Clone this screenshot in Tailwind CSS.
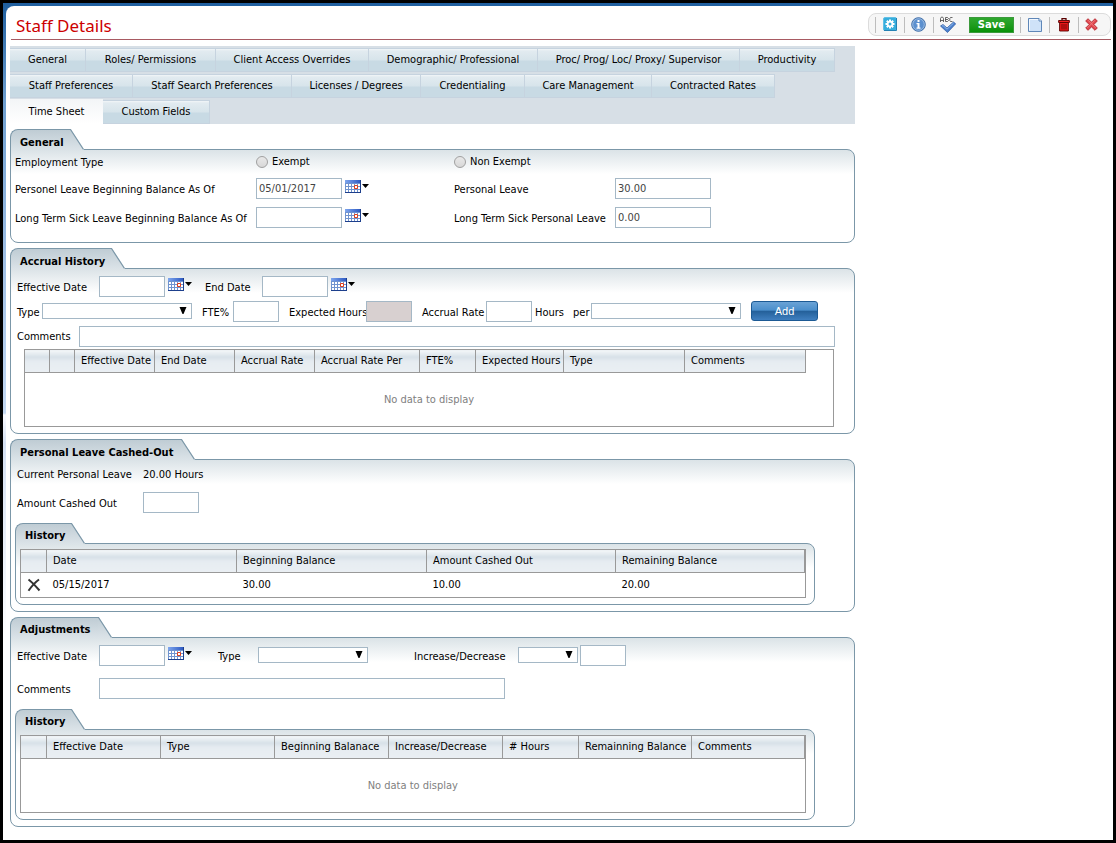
<!DOCTYPE html>
<html lang="en">
<head>
<meta charset="utf-8">
<title>Staff Details</title>
<script src="https://cdn.jsdelivr.net/npm/@tailwindcss/browser@4"></script>
</head>
<body class="flex min-h-screen flex-col border-3 border-black font-['DejaVu_Sans_Condensed','DejaVu_Sans',sans-serif] text-[11px] leading-4 text-black">

<svg class="absolute size-0" aria-hidden="true">
  <defs>
    <linearGradient id="tabfill" x1="0" y1="0" x2="0" y2="1"><stop offset="0" stop-color="#bfccd4"/><stop offset="1" stop-color="#dbe3e8"/></linearGradient>
    <linearGradient id="calhead" x1="0" y1="0" x2="1" y2="0"><stop offset="0" stop-color="#7ea6ee"/><stop offset="1" stop-color="#2a56c0"/></linearGradient>
  </defs>
  <symbol id="calendar" viewBox="0 0 24 13">
    <rect width="16" height="13" fill="#6f93cf"/>
    <rect width="16" height="3" fill="url(#calhead)"/>
    <path d="M1 4h2v2H1zM4 4h2v2H4zM7 4h2v2H7zM10 4h2v2h-2zM13 4h2v2h-2zM1 7h2v2H1zM4 7h2v2H4zM7 7h2v2H7zM13 7h2v2h-2zM1 10h2v2H1zM4 10h2v2H4zM7 10h2v2H7zM10 10h2v2h-2zM13 10h2v2h-2z" fill="#fff"/>
    <path d="M9.500 5.500h3v3h-3z" fill="#fff" stroke="#e0401c"/>
    <path d="M15.500 0v13M0 12.500h16" stroke="#1d3f8c"/>
    <path d="M17 4h7l-3.500 4z" fill="#000"/>
  </symbol>
  <symbol id="slant" viewBox="0 0 14 21">
    <path d="M0 0h.5L14 20v1H0z" fill="url(#tabfill)"/>
    <path d="M0 .5h.5L13.500 20.500" fill="none" stroke="#7b97a8" stroke-width="1.200"/>
  </symbol>
</svg>

<div class="flex flex-1 flex-col bg-[#1f5f9f] bg-[linear-gradient(#1f5f9f_0px,#6f9fcf_100px,#9dbde3_250px,#c5d9f2_410px,#fafbff_412px,#d5e0f2_440px,#fff_640px)] pt-[3px] pl-[3px]">
<main class="flex-1 rounded-tl-lg bg-white pt-1 pr-0.5 pb-3 pl-1 [&_label[for]]:pt-0.5">

  <header class="ml-px flex h-[30px] items-center justify-between border-b border-[#a85a62]">
    <h1 class="pt-0.5 pl-[5px] font-['Noto_Sans',sans-serif] text-[17px] leading-5 text-[#cc0000]">Staff Details</h1>
    <div class="flex h-[23px] items-center rounded-lg border border-[#dcdcdc] bg-[#f6f6f6] pl-[6px]">
      <button aria-label="Settings" class="flex h-4 w-[29px] items-center border-l border-[#bdbdbd] pl-[7px]">
        <svg class="-mt-0.5" width="14" height="14" viewBox="0 0 14 14"><rect x=".5" y=".5" width="13" height="13" rx="1.500" fill="#36aedd" stroke="#62bfe4"/><path d="M1 13.500h12.500V1" fill="none" stroke="#2482b4"/><g stroke="#fff" stroke-width="2"><path d="M7 2.500v9M2.500 7h9M3.800 3.800l6.400 6.400M10.200 3.800l-6.400 6.400"/></g><circle cx="7" cy="7" r="3.200" fill="#fff"/><circle cx="7" cy="7" r="1.500" fill="#36aedd"/></svg>
      </button>
      <button aria-label="Information" class="flex h-4 w-[29px] items-center border-l border-[#bdbdbd] pl-[6px]">
        <svg width="15" height="15" viewBox="0 0 15 15"><circle cx="7.500" cy="7.500" r="6.800" fill="#4a7fc1" stroke="#3f6ea8"/><circle cx="7.500" cy="7.500" r="5.800" fill="#5c90cf" stroke="#b4cdea" stroke-width=".8"/><path d="M6.500 3h2v2h-2zM5.500 6h3v4.500h1v1.200H5.500v-1.200h1V7.200h-1z" fill="#fff"/></svg>
      </button>
      <button aria-label="Spell check" class="flex h-4 w-[29px] items-center border-l border-[#bdbdbd] pl-[6px]">
        <svg class="-my-1 shrink-0" width="16" height="18" viewBox="0 0 16 18"><path d="M.5 6V2.500l1-1.500h1l1 1.500V6M.5 4.500h3M5.500 5.500v-4h2l1 1-1 1 1 1-1 1zM5.500 3.500h2M12.500 1.500h-2l-.7 1v2l.7 1h2" fill="none" stroke="#444" stroke-width=".8"/><path d="M.5 10l2.500-1.500 4 3.500 6.500-6 2.200 1.800L7.500 16.500z" fill="#4a80cc" stroke="#335fa8" stroke-width=".8"/><path d="M2 10l1-.5 4 3.700 6.500-6" fill="none" stroke="#90b8ea"/></svg>
      </button>
      <button class="mr-[6px] ml-[7px] h-4 w-[45px] border border-[#3c9a3c] bg-linear-to-b from-[#2fa82f] to-[#079107] font-['DejaVu_Sans',sans-serif] text-[10px] leading-3 font-bold text-white">Save</button>
      <button aria-label="New" class="flex h-4 w-[29px] items-center border-l border-[#bdbdbd] pl-[7px]">
        <svg width="14" height="14" viewBox="0 0 14 14"><path d="M.5.500h10.500l2.500 2.500v10.500H.5z" fill="#cfe2f8" stroke="#5f87b8"/><path d="M1.500 12.500V1.500h9" fill="none" stroke="#f2f8ff"/><path d="M11 .5V3h2.500" fill="#fff" stroke="#5f87b8"/></svg>
      </button>
      <button aria-label="Delete" class="flex h-4 w-[29px] items-center border-l border-[#bdbdbd] pl-[8px]">
        <svg width="12" height="14" viewBox="0 0 12 14"><path d="M4 2V.7h4V2" fill="none" stroke="#5a0000" stroke-width="1.300"/><path d="M.6 2.500h10.800v2H.6z" fill="#f02020" stroke="#5a0000" stroke-width=".9"/><path d="M1.600 4.500h8.800v8.500H1.600z" fill="#e81818" stroke="#5a0000" stroke-width=".9"/><path d="M4 6v5.500M6 6v5.500M8 6v5.500" stroke="#5a0000" stroke-width=".8"/></svg>
      </button>
      <button aria-label="Close" class="flex h-4 w-[32px] items-center border-l border-[#bdbdbd] pl-[6px]">
        <svg width="13" height="13" viewBox="0 0 13 13"><path d="M3 .7l3.500 3.500L10 .7l2.300 2.300-3.400 3.500 3.400 3.500-2.300 2.300-3.500-3.400L3 12.300.7 10l3.500-3.500L.7 3z" fill="#e0454c" stroke="#b52c34" stroke-width=".9"/><path d="M3 2.200l7.500 7.600M10 2.200L2.300 10" stroke="#f07a7e"/></svg>
      </button>
    </div>
  </header>

  <div class="max-w-[845px]">
  <nav class="mt-[6px] bg-[#d7dfe6] whitespace-nowrap
    [&_a]:flex [&_a]:h-6 [&_a]:items-center [&_a]:justify-center [&_a]:border [&_a]:border-l-0 [&_a]:border-[#c6d3df] [&_a]:bg-[linear-gradient(#f2f6f8_0px,#e2ebf0_2px,#d7e4eb_11px,#c8dae4_12px,#c8dae4_100%)]">
    <div class="flex h-[26px] items-end">
      <a href="#" class="w-[76px]">General</a><a href="#" class="w-[130px]">Roles/ Permissions</a><a href="#" class="w-[153px]">Client Access Overrides</a><a href="#" class="w-[169px]">Demographic/ Professional</a><a href="#" class="w-[202px]">Proc/ Prog/ Loc/ Proxy/ Supervisor</a><a href="#" class="w-[95px]">Productivity</a>
    </div>
    <div class="flex h-[26px] items-end">
      <a href="#" class="w-[123px]">Staff Preferences</a><a href="#" class="w-[159px]">Staff Search Preferences</a><a href="#" class="w-[129px]">Licenses / Degrees</a><a href="#" class="w-[104px]">Credentialing</a><a href="#" class="w-[127px]">Care Management</a><a href="#" class="w-[123px]">Contracted Rates</a>
    </div>
    <div class="flex h-[26px] items-end">
      <span aria-current="page" class="flex h-[25px] w-[93px] items-center justify-center bg-linear-to-b from-[#f3f5f7] to-white">Time Sheet</span><a href="#" class="w-[107px]">Custom Fields</a>
    </div>
  </nav>

  <!-- General -->
  <section class="mt-[5px]">
    <div class="relative z-10 -mb-px flex h-[21px]">
      <h2 class="rounded-tl-lg border-t border-l border-[#7b97a8] bg-linear-to-b from-[#bfccd4] to-[#dbe3e8] pt-[5px] pl-[9px] w-[60px] font-bold whitespace-nowrap">General</h2>
      <svg width="14" height="21"><use href="#slant"/></svg>
    </div>
    <div class="rounded-r-lg rounded-bl-lg border border-[#7b97a8] bg-[linear-gradient(#dbe3e7,#fff_24px)] px-1 pb-[10px]">
      <div class="flex h-6 items-center" role="radiogroup" aria-label="Employment Type">
        <span class="w-[241px] pt-0.5">Employment Type</span>
        <label class="flex w-[198px] items-center gap-1"><input type="radio" name="emp" class="size-3 appearance-none rounded-full border border-[#a0a0a0] bg-linear-to-b from-[#e8e8e8] to-[#d8d8d8]">Exempt</label>
        <label class="flex items-center gap-1"><input type="radio" name="emp" class="size-3 appearance-none rounded-full border border-[#a0a0a0] bg-linear-to-b from-[#e8e8e8] to-[#d8d8d8]">Non Exempt</label>
      </div>
      <div class="flex h-[29px] items-center">
        <label for="plb" class="w-[241px]">Personel Leave Beginning Balance As Of</label>
        <input id="plb" value="05/01/2017" class="h-[21px] w-[86px] border border-[#a5b8c6] bg-white px-[2px] text-[#444]">
        <button aria-label="Pick date" class="mr-[85px] mb-1 ml-[3px]"><svg width="24" height="13"><use href="#calendar"/></svg></button>
        <label for="pl" class="w-[161px]">Personal Leave</label>
        <input id="pl" value="30.00" class="h-[21px] w-[96px] border border-[#a5b8c6] bg-white px-[2px] text-[#444]">
      </div>
      <div class="flex h-[29px] items-center">
        <label for="ltb" class="w-[241px]">Long Term Sick Leave Beginning Balance As Of</label>
        <input id="ltb" class="h-[21px] w-[86px] border border-[#a5b8c6] bg-white px-[2px] text-[#444]">
        <button aria-label="Pick date" class="mr-[85px] mb-1 ml-[3px]"><svg width="24" height="13"><use href="#calendar"/></svg></button>
        <label for="ltp" class="w-[161px]">Long Term Sick Personal Leave</label>
        <input id="ltp" value="0.00" class="h-[21px] w-[96px] border border-[#a5b8c6] bg-white px-[2px] text-[#444]">
      </div>
    </div>
  </section>

  <!-- Accrual History -->
  <section class="mt-[5px]">
    <div class="relative z-10 -mb-px flex h-[21px]">
      <h2 class="rounded-tl-lg border-t border-l border-[#7b97a8] bg-linear-to-b from-[#bfccd4] to-[#dbe3e8] pt-[5px] pl-[9px] w-[101px] font-bold whitespace-nowrap">Accrual History</h2>
      <svg width="14" height="21"><use href="#slant"/></svg>
    </div>
    <div class="rounded-r-lg rounded-bl-lg border border-[#7b97a8] bg-[linear-gradient(#dbe3e7,#fff_24px)] pt-1 pl-[6px] pr-[19px] pb-[6px]">
      <div class="flex h-[27px] items-center">
        <label for="aed" class="w-[82px]">Effective Date</label>
        <input id="aed" class="h-[21px] w-[66px] border border-[#a5b8c6] bg-white px-[2px]">
        <button aria-label="Pick date" class="mr-[13px] mb-1 ml-[3px]"><svg width="24" height="13"><use href="#calendar"/></svg></button>
        <label for="aend" class="w-[57px]">End Date</label>
        <input id="aend" class="h-[21px] w-[66px] border border-[#a5b8c6] bg-white px-[2px]">
        <button aria-label="Pick date" class="mb-1 ml-[3px]"><svg width="24" height="13"><use href="#calendar"/></svg></button>
      </div>
      <div class="flex h-[23px] items-center whitespace-nowrap">
        <label for="aty" class="w-[25px]">Type</label>
        <span class="relative mb-px flex"><select id="aty" class="h-4 w-[150px] appearance-none border border-[#a5b8c6] bg-white"></select><svg class="pointer-events-none absolute top-1 right-[5px]" width="8" height="7"><path d="M.5 0h7L4.500 7h-1z"/></svg></span>
        <label for="afte" class="ml-[10px] w-[31px]">FTE%</label>
        <input id="afte" class="h-[21px] w-[46px] border border-[#a5b8c6] bg-white px-[2px]">
        <label for="aex" class="ml-[10px] w-[77px]">Expected Hours</label>
        <input id="aex" disabled class="h-[21px] w-[46px] border border-[#a5b8c6] bg-[#d8d0d0] px-[2px]">
        <label for="ara" class="ml-[10px] w-[64px]">Accrual Rate</label>
        <input id="ara" class="h-[21px] w-[46px] border border-[#a5b8c6] bg-white px-[2px]">
        <span class="ml-[3px] w-[38px] pt-0.5">Hours</span>
        <label for="aper" class="w-[18px]">per</label>
        <span class="relative mb-px flex"><select id="aper" class="h-4 w-[150px] appearance-none border border-[#a5b8c6] bg-white"></select><svg class="pointer-events-none absolute top-1 right-[5px]" width="8" height="7"><path d="M.5 0h7L4.500 7h-1z"/></svg></span>
        <button class="mb-px ml-[10px] h-5 w-[67px] rounded-[3px] border border-[#1c5a94] bg-[linear-gradient(#6aa3d6,#4a8ecb_46%,#235f99_50%,#3f7fbf)] font-['Liberation_Sans',sans-serif] text-white">Add</button>
      </div>
      <div class="flex h-[26px] items-center">
        <label for="acm" class="w-[62px]">Comments</label>
        <input id="acm" class="h-[21px] flex-1 border border-[#a5b8c6] bg-white px-[2px]">
      </div>
      <table class="ml-[7px] w-[810px] table-fixed border-collapse border border-[#999] bg-white whitespace-nowrap [&_th]:text-left [&_th]:font-normal">
        <colgroup><col class="w-[25px]"><col class="w-[25px]"><col class="w-[80px]"><col class="w-[80px]"><col class="w-[80px]"><col class="w-[105px]"><col class="w-[56px]"><col class="w-[88px]"><col class="w-[121px]"><col class="w-[121px]"><col></colgroup>
        <thead><tr class="h-[23px] [&>th]:border [&>th]:border-[#999] [&>th]:bg-[linear-gradient(#f4f7f9,#d7e1e8_30%,#e6ecf1_50%,#eaeff3)] [&>th]:pl-[6px]"><th></th><th></th><th>Effective Date</th><th>End Date</th><th>Accrual Rate</th><th>Accrual Rate Per</th><th>FTE%</th><th>Expected Hours</th><th>Type</th><th>Comments</th><td></td></tr></thead>
        <tbody><tr class="h-[54px]"><td colspan="11" class="text-center text-[#808080]">No data to display</td></tr></tbody>
      </table>
    </div>
  </section>

  <!-- Personal Leave Cashed-Out -->
  <section class="mt-[5px]">
    <div class="relative z-10 -mb-px flex h-[21px]">
      <h2 class="rounded-tl-lg border-t border-l border-[#7b97a8] bg-linear-to-b from-[#bfccd4] to-[#dbe3e8] pt-[5px] pl-[9px] w-[171px] font-bold whitespace-nowrap">Personal Leave Cashed-Out</h2>
      <svg width="14" height="21"><use href="#slant"/></svg>
    </div>
    <div class="rounded-r-lg rounded-bl-lg border border-[#7b97a8] bg-[linear-gradient(#dbe3e7,#fff_24px)] pl-1 pb-[6px]">
      <div class="flex h-7 items-center pl-[2px] pt-px"><span class="w-[126px]">Current Personal Leave</span><span>20.00 Hours</span></div>
      <div class="flex h-[29px] items-center pl-[2px]">
        <label for="aco" class="w-[126px]">Amount Cashed Out</label>
        <input id="aco" class="h-[21px] w-[56px] border border-[#a5b8c6] bg-white px-[2px]">
      </div>
      <section class="mt-[6px] max-w-[800px]">
        <div class="relative z-10 -mb-px flex h-[21px]">
          <h3 class="rounded-tl-lg border-t border-l border-[#7b97a8] bg-linear-to-b from-[#bfccd4] to-[#dbe3e8] pt-1 pl-[9px] w-[56px] font-bold whitespace-nowrap">History</h3>
          <svg width="14" height="21"><use href="#slant"/></svg>
        </div>
        <div class="rounded-r-lg rounded-bl-lg border border-[#7b97a8] bg-[linear-gradient(#dbe3e7,#fff_24px)] pt-[5px] pr-2 pb-[6px] pl-1">
          <table class="w-full table-fixed border-collapse border border-[#999] bg-white whitespace-nowrap [&_td]:pl-[6px] [&_th]:text-left [&_th]:font-normal">
            <colgroup><col class="w-[26px]"><col class="w-[190px]"><col class="w-[190px]"><col class="w-[189px]"><col></colgroup>
            <thead><tr class="h-[23px] [&>th]:border [&>th]:border-[#999] [&>th]:bg-[linear-gradient(#f4f7f9,#d7e1e8_30%,#e6ecf1_50%,#eaeff3)] [&>th]:pl-[6px] [&>th:last-child]:border-r-2"><th></th><th>Date</th><th>Beginning Balance</th><th>Amount Cashed Out</th><th>Remaining Balance</th></tr></thead>
            <tbody><tr class="h-[25px]"><td><button aria-label="Delete row" class="block"><svg width="14" height="14" viewBox="0 0 14 14"><path d="M1.500 1.500C5 4 9 8.500 12.500 12.500M12 1.500C8.500 4 4.500 8.500 1.500 12.800" fill="none" stroke="#333" stroke-width="2"/></svg></button></td><td>05/15/2017</td><td>30.00</td><td>10.00</td><td>20.00</td></tr></tbody>
          </table>
        </div>
      </section>
    </div>
  </section>

  <!-- Adjustments -->
  <section class="mt-[5px]">
    <div class="relative z-10 -mb-px flex h-[21px]">
      <h2 class="rounded-tl-lg border-t border-l border-[#7b97a8] bg-linear-to-b from-[#bfccd4] to-[#dbe3e8] pt-1 pl-[9px] w-[88px] font-bold whitespace-nowrap">Adjustments</h2>
      <svg width="14" height="21"><use href="#slant"/></svg>
    </div>
    <div class="rounded-r-lg rounded-bl-lg border border-[#7b97a8] bg-[linear-gradient(#dbe3e7,#fff_24px)] pl-1 pb-[6px]">
      <div class="flex h-[35px] items-center pl-[2px]">
        <label for="jed" class="w-[82px]">Effective Date</label>
        <input id="jed" class="h-[21px] w-[66px] border border-[#a5b8c6] bg-white px-[2px]">
        <button aria-label="Pick date" class="mr-[26px] mb-1 ml-[3px]"><svg width="24" height="13"><use href="#calendar"/></svg></button>
        <label for="jty" class="w-[40px]">Type</label>
        <span class="relative mb-px flex"><select id="jty" class="h-4 w-[110px] appearance-none border border-[#a5b8c6] bg-white"></select><svg class="pointer-events-none absolute top-1 right-[5px]" width="8" height="7"><path d="M.5 0h7L4.500 7h-1z"/></svg></span>
        <label for="jid" class="ml-[46px] w-[104px]">Increase/Decrease</label>
        <span class="relative mb-px flex"><select id="jid" class="h-4 w-[60px] appearance-none border border-[#a5b8c6] bg-white"></select><svg class="pointer-events-none absolute top-1 right-[5px]" width="8" height="7"><path d="M.5 0h7L4.500 7h-1z"/></svg></span>
        <input aria-label="Adjustment hours" class="ml-[2px] h-[21px] w-[46px] border border-[#a5b8c6] bg-white px-[2px]">
      </div>
      <div class="flex h-[31px] items-center pl-[2px]">
        <label for="jcm" class="w-[82px]">Comments</label>
        <input id="jcm" class="h-[21px] w-[406px] border border-[#a5b8c6] bg-white px-[2px]">
      </div>
      <section class="mt-[5px] max-w-[800px]">
        <div class="relative z-10 -mb-px flex h-[21px]">
          <h3 class="rounded-tl-lg border-t border-l border-[#7b97a8] bg-linear-to-b from-[#bfccd4] to-[#dbe3e8] pt-1 pl-[9px] w-[56px] font-bold whitespace-nowrap">History</h3>
          <svg width="14" height="21"><use href="#slant"/></svg>
        </div>
        <div class="rounded-r-lg rounded-bl-lg border border-[#7b97a8] bg-[linear-gradient(#dbe3e7,#fff_24px)] pt-[5px] pr-2 pb-[6px] pl-1">
          <table class="w-full table-fixed border-collapse border border-[#999] bg-white whitespace-nowrap [&_th]:text-left [&_th]:font-normal">
            <colgroup><col class="w-[26px]"><col class="w-[114px]"><col class="w-[114px]"><col class="w-[114px]"><col class="w-[114px]"><col class="w-[76px]"><col class="w-[113px]"><col></colgroup>
            <thead><tr class="h-[23px] [&>th]:border [&>th]:border-[#999] [&>th]:bg-[linear-gradient(#f4f7f9,#d7e1e8_30%,#e6ecf1_50%,#eaeff3)] [&>th]:pl-[6px] [&>th:last-child]:border-r-2"><th></th><th>Effective Date</th><th>Type</th><th>Beginning Balanace</th><th>Increase/Decrease</th><th># Hours</th><th>Remainning Balance</th><th>Comments</th></tr></thead>
            <tbody><tr class="h-[54px]"><td colspan="8" class="text-center text-[#808080]">No data to display</td></tr></tbody>
          </table>
        </div>
      </section>
    </div>
  </section>
  </div>
</main>
</div>
</body>
</html>
